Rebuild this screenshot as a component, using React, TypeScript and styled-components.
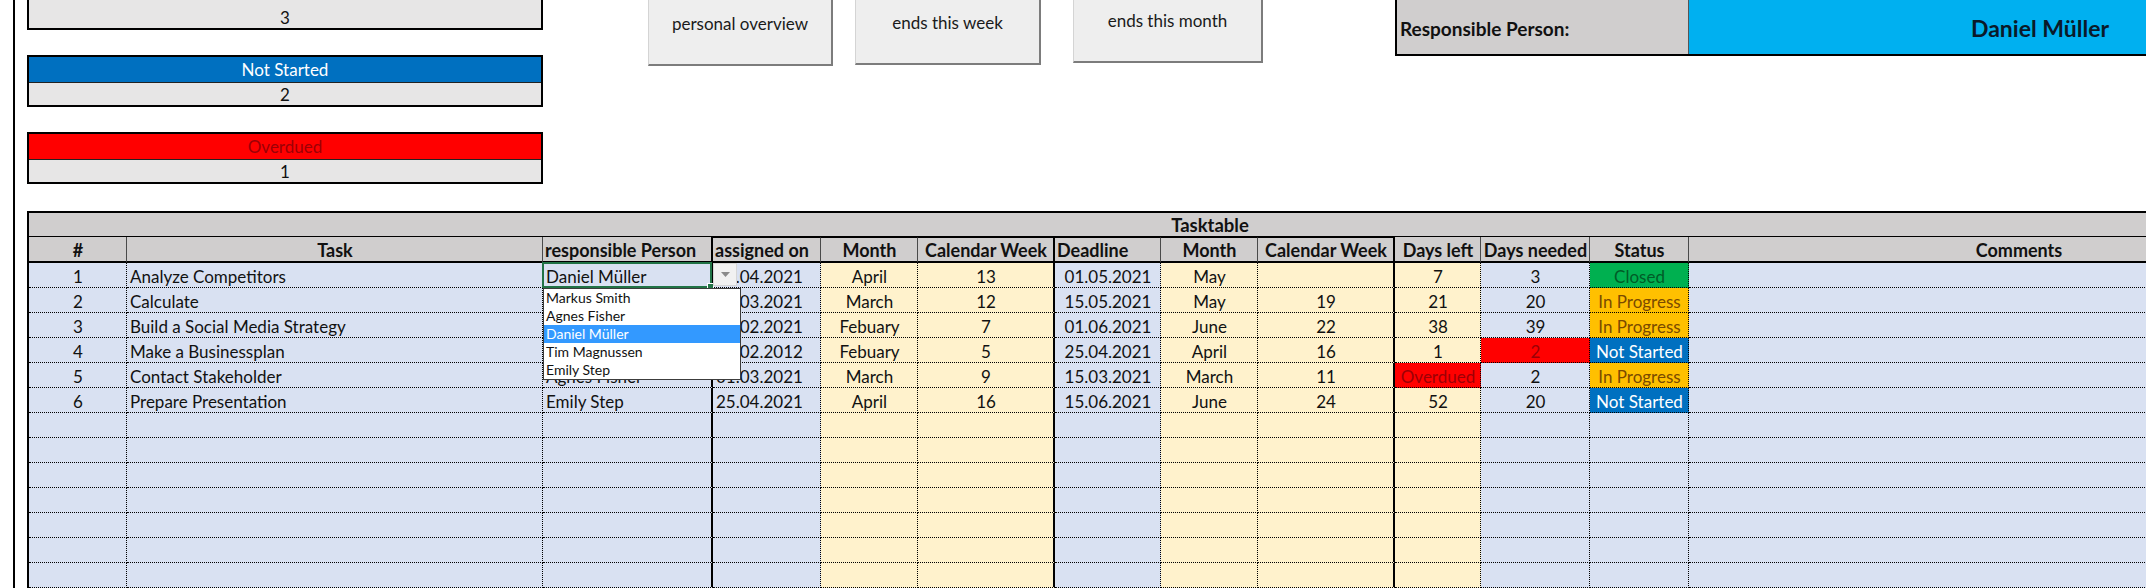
import React from 'react'
import styled, { createGlobalStyle } from 'styled-components'

const GlobalStyle = createGlobalStyle`
  html, body {
    margin: 0;
    padding: 0;
    background: #fff;
  }
  body {
    font-family: Lato, 'Open Sans', 'DejaVu Sans', sans-serif;
    color: #111;
    overflow: hidden;
  }
`

const BLUE_CELL = '#D9E1F2'
const YELLOW_CELL = '#FFF2CC'
const HEAD_GRAY = '#D0CECE'

type Tone = 'closed' | 'progress' | 'waiting' | 'alert'

const TONES: Record<Tone, { bg: string; fg: string }> = {
  closed: { bg: '#00B050', fg: '#005C27' },
  progress: { bg: '#FFC000', fg: '#7A4A00' },
  waiting: { bg: '#0070C0', fg: '#ffffff' },
  alert: { bg: '#FF0000', fg: '#9C0006' }
}

type CellValue = string | { text: string; tone: Tone }

type Column = {
  title: string
  width: number
  bg: string
  align: 'left' | 'center'
  headAlign: 'left' | 'center'
  thick?: boolean
  block?: boolean
}

const columns: Column[] = [
  { title: '#', width: 98, bg: BLUE_CELL, align: 'center', headAlign: 'center' },
  { title: 'Task', width: 416, bg: BLUE_CELL, align: 'left', headAlign: 'center' },
  { title: 'responsible Person', width: 170, bg: BLUE_CELL, align: 'left', headAlign: 'left', thick: true },
  { title: 'assigned on', width: 108, bg: BLUE_CELL, align: 'left', headAlign: 'left', block: true },
  { title: 'Month', width: 97, bg: YELLOW_CELL, align: 'center', headAlign: 'center', block: true },
  { title: 'Calendar Week', width: 137, bg: YELLOW_CELL, align: 'center', headAlign: 'center', thick: true, block: true },
  { title: 'Deadline', width: 106, bg: BLUE_CELL, align: 'center', headAlign: 'left', block: true },
  { title: 'Month', width: 97, bg: YELLOW_CELL, align: 'center', headAlign: 'center', block: true },
  { title: 'Calendar Week', width: 137, bg: YELLOW_CELL, align: 'center', headAlign: 'center', thick: true, block: true },
  { title: 'Days left', width: 86, bg: YELLOW_CELL, align: 'center', headAlign: 'center' },
  { title: 'Days needed', width: 109, bg: BLUE_CELL, align: 'center', headAlign: 'center' },
  { title: 'Status', width: 99, bg: BLUE_CELL, align: 'center', headAlign: 'center' },
  { title: 'Comments', width: 660, bg: BLUE_CELL, align: 'center', headAlign: 'center' }
]

const tasks: CellValue[][] = [
  ['1', 'Analyze Competitors', 'Daniel Müller', '01.04.2021', 'April', '13', '01.05.2021', 'May', '', '7', '3', { text: 'Closed', tone: 'closed' }, ''],
  ['2', 'Calculate', 'Markus Smith', '25.03.2021', 'March', '12', '15.05.2021', 'May', '19', '21', '20', { text: 'In Progress', tone: 'progress' }, ''],
  ['3', 'Build a Social Media Strategy', 'Tim Magnussen', '15.02.2021', 'Febuary', '7', '01.06.2021', 'June', '22', '38', '39', { text: 'In Progress', tone: 'progress' }, ''],
  ['4', 'Make a Businessplan', 'Daniel Müller', '03.02.2012', 'Febuary', '5', '25.04.2021', 'April', '16', '1', { text: '2', tone: 'alert' }, { text: 'Not Started', tone: 'waiting' }, ''],
  ['5', 'Contact Stakeholder', 'Agnes Fisher', '01.03.2021', 'March', '9', '15.03.2021', 'March', '11', { text: 'Overdued', tone: 'alert' }, '2', { text: 'In Progress', tone: 'progress' }, ''],
  ['6', 'Prepare Presentation', 'Emily Step', '25.04.2021', 'April', '16', '15.06.2021', 'June', '24', '52', '20', { text: 'Not Started', tone: 'waiting' }, '']
]

const EMPTY_ROWS = 8

const people = ['Markus Smith', 'Agnes Fisher', 'Daniel Müller', 'Tim Magnussen', 'Emily Step']

const Page = styled.div`
  width: 2146px;
  height: 588px;
  overflow: hidden;
  padding-left: 13px;
  box-sizing: border-box;
  background: #fff;
`

const Sheet = styled.div`
  height: 100%;
  border-left: 2px solid #000;
  padding-left: 12px;
  box-sizing: border-box;
`

const TopRow = styled.div`
  display: flex;
  align-items: flex-start;
  height: 211px;
`

// the first card is scrolled up, only its count row is still on screen
const CardStack = styled.div`
  width: 516px;
  flex-shrink: 0;
  display: flex;
  flex-direction: column;
  gap: 25px;
  margin-top: -28px;
`

const Card = styled.div`
  border: 2px solid #000;
  box-sizing: border-box;
  display: flex;
  flex-direction: column;
`

const CardHead = styled.div<{ $bg: string; $fg: string }>`
  height: 25px;
  flex-shrink: 0;
  background: ${({ $bg }) => $bg};
  color: ${({ $fg }) => $fg};
  border-bottom: 1px solid #222;
  display: flex;
  align-items: center;
  justify-content: center;
  font-size: 17px;
`

const CardValue = styled.div<{ $tall?: boolean }>`
  height: ${({ $tall }) => ($tall ? 28 : 22)}px;
  box-sizing: border-box;
  padding-top: ${({ $tall }) => ($tall ? 7 : 0)}px;
  background: #E7E6E6;
  display: flex;
  align-items: center;
  justify-content: center;
  font-size: 17px;
`

const ActionButton = styled.button<{ $width: number; $lift: number; $gap: number }>`
  flex-shrink: 0;
  width: ${({ $width }) => $width}px;
  height: 84px;
  margin-top: -${({ $lift }) => $lift}px;
  margin-left: ${({ $gap }) => $gap}px;
  background: #eeeeee;
  border: none;
  border-left: 1px solid #d4d4d4;
  border-right: 2px solid #7c7c7c;
  border-bottom: 2px solid #7c7c7c;
  box-sizing: border-box;
  font-family: Lato, 'Open Sans', sans-serif;
  font-size: 17px;
  color: #1a1a1a;
  padding: 0;
`

const PersonPanel = styled.div`
  flex-shrink: 0;
  margin-left: 132px;
  width: 996px;
  height: 56px;
  display: flex;
  border-left: 2px solid #000;
  border-bottom: 2px solid #000;
  box-sizing: border-box;
  font-weight: 700;
`

const PanelLabel = styled.div`
  width: 292px;
  background: ${HEAD_GRAY};
  border-right: 1px solid #555;
  box-sizing: border-box;
  display: flex;
  align-items: center;
  padding: 2px 0 0 3px;
  font-size: 19px;
`

const PanelValue = styled.div`
  flex: 1;
  background: #00B0F0;
  display: flex;
  align-items: center;
  justify-content: center;
  padding-top: 2px;
  font-size: 23px;
  color: #0a1a2a;
`

const Grid = styled.div<{ $template: string }>`
  display: grid;
  grid-template-columns: ${({ $template }) => $template};
  grid-template-rows: 24px 26px;
  grid-auto-rows: 25px;
  width: max-content;
  border-left: 2px solid #000;
  border-top: 2px solid #000;
`

const TitleBar = styled.div`
  grid-column: 1 / -1;
  background: ${HEAD_GRAY};
  border-bottom: 1px solid #000;
  box-sizing: border-box;
  font-weight: 700;
  font-size: 18.5px;
  display: flex;
  align-items: center;
  justify-content: center;
  padding-left: 42px;
`

const HeadCell = styled.div<{ $align: string; $thick?: boolean; $block?: boolean }>`
  background: ${HEAD_GRAY};
  box-sizing: border-box;
  border-right: ${({ $thick }) => ($thick ? '2px solid #000' : '1px solid #4a4a4a')};
  border-bottom: 2px solid #000;
  border-top: ${({ $block }) => ($block ? '1px solid #000' : '0')};
  font-weight: 700;
  font-size: 18px;
  white-space: nowrap;
  overflow: hidden;
  display: flex;
  align-items: center;
  justify-content: ${({ $align }) => ($align === 'left' ? 'flex-start' : 'center')};
  padding: 1px 1px 0 2px;
`

const BodyCell = styled.div<{ $bg: string; $fg: string; $align: string; $thick?: boolean; $active?: boolean }>`
  position: ${({ $active }) => ($active ? 'relative' : 'static')};
  background: ${({ $bg }) => $bg};
  color: ${({ $fg }) => $fg};
  box-sizing: border-box;
  border-right: ${({ $thick }) => ($thick ? '2px solid #000' : '1px dotted #000')};
  border-bottom: 1px dotted #000;
  font-size: 17px;
  white-space: nowrap;
  display: flex;
  align-items: center;
  justify-content: ${({ $align }) => ($align === 'left' ? 'flex-start' : 'center')};
  padding: 3px 2px 0 3px;
`

const Selection = styled.div`
  position: absolute;
  inset: -1px -1px -1px -1px;
  border: 2px solid #217346;
  pointer-events: none;
`

const FillHandle = styled.span`
  position: absolute;
  right: -4px;
  bottom: -4px;
  width: 5px;
  height: 5px;
  background: #217346;
  border: 1px solid #fff;
`

const DropButton = styled.div`
  position: absolute;
  top: 0;
  left: calc(100% + 2px);
  width: 24px;
  height: 23px;
  background: #f1f1f1;
  border: 1px solid #d6d6d6;
  box-sizing: border-box;
  display: flex;
  align-items: center;
  justify-content: center;
  z-index: 4;
`

const DropList = styled.ul`
  position: absolute;
  top: calc(100% + 1px);
  left: 0;
  width: 196px;
  margin: 0;
  padding: 0;
  list-style: none;
  background: #fff;
  border: 1px solid #3c3c3c;
  z-index: 5;
`

const DropItem = styled.li<{ $active?: boolean }>`
  height: 18px;
  line-height: 18px;
  padding-left: 2px;
  font-size: 14px;
  color: ${({ $active }) => ($active ? '#fff' : '#111')};
  background: ${({ $active }) => ($active ? '#3399FF' : 'transparent')};
`

function PersonDropdown() {
  return (
    <>
      <Selection>
        <FillHandle />
      </Selection>
      <DropButton>
        <svg width="9" height="5" viewBox="0 0 9 5">
          <path d="M0 0 L9 0 L4.5 5 Z" fill="#8a8a8a" />
        </svg>
      </DropButton>
      <DropList>
        {people.map((name) => (
          <DropItem key={name} $active={name === 'Daniel Müller'}>
            {name}
          </DropItem>
        ))}
      </DropList>
    </>
  )
}

export default function App() {
  const template = columns.map((c) => `${c.width}px`).join(' ')
  const blanks: CellValue[][] = Array.from({ length: EMPTY_ROWS }, () => columns.map(() => ''))
  const rows = [...tasks, ...blanks]

  return (
    <Page>
      <GlobalStyle />
      <Sheet>
        <TopRow>
          <CardStack>
            <Card>
              <CardHead $bg="#FFC000" $fg="#7A4A00">In Progress</CardHead>
              <CardValue $tall>3</CardValue>
            </Card>
            <Card>
              <CardHead $bg="#0070C0" $fg="#ffffff">Not Started</CardHead>
              <CardValue>2</CardValue>
            </Card>
            <Card>
              <CardHead $bg="#FF0000" $fg="#9C0006">Overdued</CardHead>
              <CardValue>1</CardValue>
            </Card>
          </CardStack>
          <ActionButton $width={185} $lift={18} $gap={105}>personal overview</ActionButton>
          <ActionButton $width={186} $lift={19} $gap={22}>ends this week</ActionButton>
          <ActionButton $width={190} $lift={21} $gap={32}>ends this month</ActionButton>
          <PersonPanel>
            <PanelLabel>Responsible Person:</PanelLabel>
            <PanelValue>Daniel Müller</PanelValue>
          </PersonPanel>
        </TopRow>

        <Grid $template={template}>
          <TitleBar>Tasktable</TitleBar>
          {columns.map((c, i) => (
            <HeadCell key={i} $align={c.headAlign} $thick={c.thick} $block={c.block}>
              {c.title}
            </HeadCell>
          ))}
          {rows.map((row, r) =>
            row.map((value, i) => {
              const col = columns[i]
              const tone = typeof value === 'string' ? undefined : TONES[value.tone]
              const text = typeof value === 'string' ? value : value.text
              const active = r === 0 && i === 2
              return (
                <BodyCell
                  key={`${r}-${i}`}
                  $bg={tone ? tone.bg : col.bg}
                  $fg={tone ? tone.fg : '#111'}
                  $align={col.align}
                  $thick={col.thick}
                  $active={active}
                >
                  {text}
                  {active && <PersonDropdown />}
                </BodyCell>
              )
            })
          )}
        </Grid>
      </Sheet>
    </Page>
  )
}
